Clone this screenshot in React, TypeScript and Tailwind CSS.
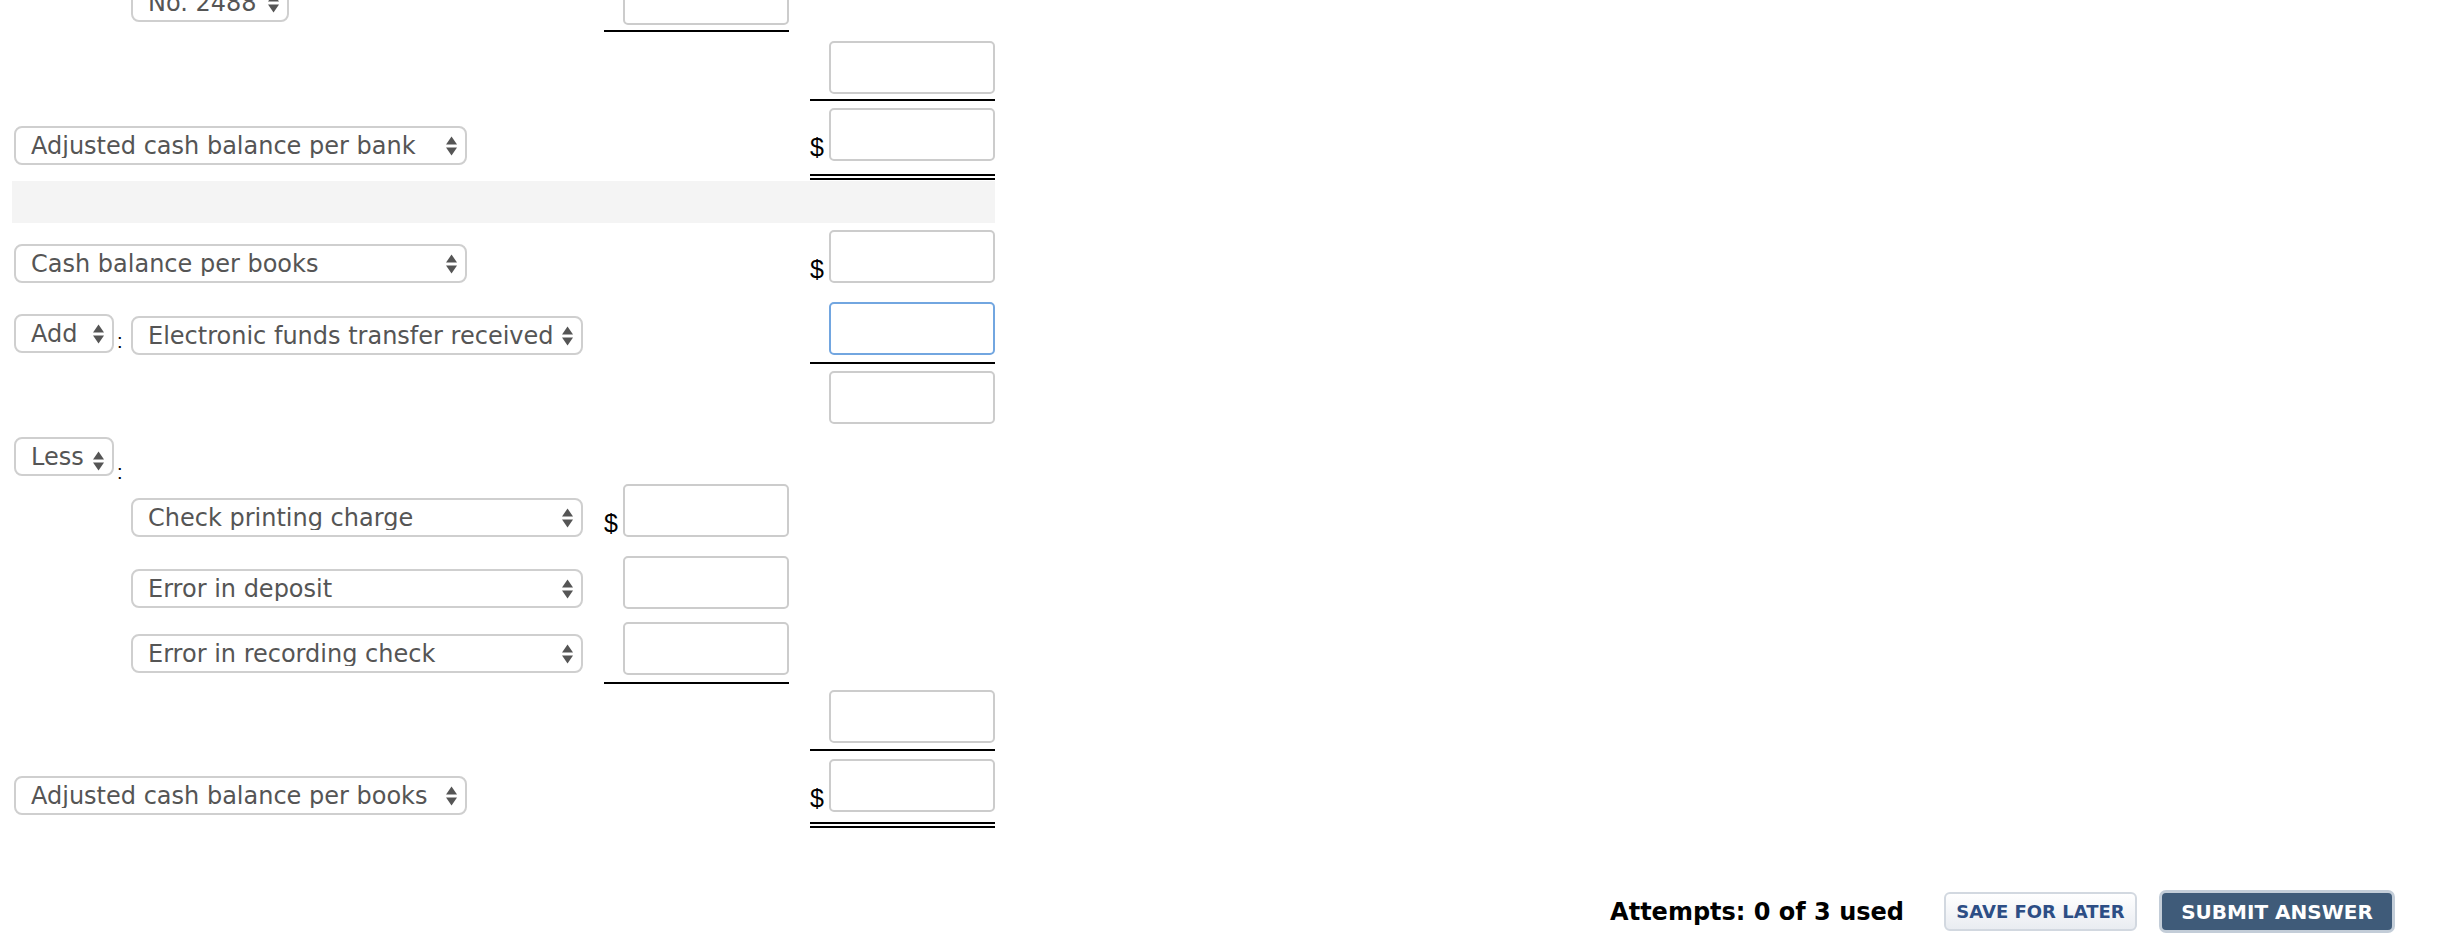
import React from 'react';

function Arrows() {
  return (
    <svg
      className="pointer-events-none absolute right-[9px] top-1/2 -translate-y-1/2"
      width="13"
      height="21"
      viewBox="0 0 13 21"
      aria-hidden="true"
    >
      <path d="M6.5 1 L12 9 H1 Z" fill="#555" />
      <path d="M6.5 20 L12 12 H1 Z" fill="#555" />
    </svg>
  );
}

function Select({ label, className }: { label: string; className: string }) {
  return (
    <div className={`relative shrink-0 ${className}`}>
      <select className="h-[39px] w-full appearance-none rounded-[8px] border-2 border-[#cfcfcf] bg-white pl-[15px] pr-0 text-[24px] leading-none text-[#555] outline-none">
        <option>{label}</option>
      </select>
      <Arrows />
    </div>
  );
}

type Rule = 'none' | 'single' | 'double';

function Amount({
  dollar = false,
  rule = 'none',
  focused = false,
  ruleGap = 'mt-[5px]',
}: {
  dollar?: boolean;
  rule?: Rule;
  focused?: boolean;
  ruleGap?: string;
}) {
  return (
    <div className="flex w-[185px] flex-col">
      <div className="flex items-end">
        <span className="w-[19px] pb-[1px] font-['Liberation_Sans',sans-serif] text-[25px] leading-none text-black">
          {dollar ? '$' : ''}
        </span>
        <input
          type="text"
          className={`h-[53px] w-[166px] rounded-[5px] border-2 bg-white outline-none ${
            focused ? 'border-[#72a6e0]' : 'border-[#cccccc]'
          }`}
        />
      </div>
      {rule === 'single' && <div className={`h-[2px] w-full bg-black ${ruleGap}`} />}
      {rule === 'double' && <div className={`h-[6px] w-full border-y-2 border-black ${ruleGap}`} />}
    </div>
  );
}

function Colon() {
  return (
    <span className="w-[17px] self-end pb-[2px] pl-[3px] font-['Liberation_Sans',sans-serif] text-[20px] leading-none text-black">
      :
    </span>
  );
}

const Empty = () => <div className="w-[185px] shrink-0" />;

export default function App() {
  return (
    <div className="h-[944px] w-[2448px] overflow-hidden bg-white font-['DejaVu_Sans','Verdana',sans-serif]">
      <div className="-mt-[28px] w-[995px] pl-[14px]">
        {/* No. 2488 row (scrolled off the top) */}
        <div className="flex h-[69px]">
          <div className="w-[590px] shrink-0 pl-[117px] pt-[11px]">
            <Select label="No. 2488" className="w-[158px]" />
          </div>
          <Amount rule="single" />
        </div>

        <div className="flex h-[67px]">
          <div className="w-[590px] shrink-0" />
          <Empty />
          <div className="w-[21px]" />
          <Amount rule="single" />
        </div>

        <div className="flex h-[73px]">
          <div className="w-[590px] shrink-0 pt-[18px]">
            <Select label="Adjusted cash balance per bank" className="w-[453px]" />
          </div>
          <Empty />
          <div className="w-[21px]" />
          <Amount dollar rule="double" ruleGap="mt-[13px]" />
        </div>

        <div className="-ml-[2px] mb-[7px] h-[42px] w-[983px] bg-[#f4f4f4]" />

        <div className="flex h-[72px]">
          <div className="w-[590px] shrink-0 pt-[14px]">
            <Select label="Cash balance per books" className="w-[453px]" />
          </div>
          <Empty />
          <div className="w-[21px]" />
          <Amount dollar />
        </div>

        <div className="flex h-[69px]">
          <div className="flex w-[590px] shrink-0 items-start">
            <div className="flex pt-[12px]">
              <Select label="Add" className="w-[100px]" />
              <Colon />
            </div>
            <div className="pt-[14px]">
              <Select label="Electronic funds transfer received" className="w-[452px]" />
            </div>
          </div>
          <Empty />
          <div className="w-[21px]" />
          <Amount focused rule="single" ruleGap="mt-[7px]" />
        </div>

        <div className="flex h-[66px]">
          <div className="w-[590px] shrink-0" />
          <Empty />
          <div className="w-[21px]" />
          <Amount />
        </div>

        <div className="flex h-[47px]">
          <div className="flex w-[590px] shrink-0">
            <Select label="Less" className="w-[100px]" />
            <Colon />
          </div>
        </div>

        <div className="flex h-[72px]">
          <div className="w-[590px] shrink-0 pl-[117px] pt-[14px]">
            <Select label="Check printing charge" className="w-[452px]" />
          </div>
          <Amount dollar />
        </div>

        <div className="flex h-[66px]">
          <div className="w-[590px] shrink-0 pl-[117px] pt-[13px]">
            <Select label="Error in deposit" className="w-[452px]" />
          </div>
          <Amount />
        </div>

        <div className="flex h-[68px]">
          <div className="w-[590px] shrink-0 pl-[117px] pt-[12px]">
            <Select label="Error in recording check" className="w-[452px]" />
          </div>
          <Amount rule="single" ruleGap="mt-[7px]" />
        </div>

        <div className="flex h-[69px]">
          <div className="w-[590px] shrink-0" />
          <Empty />
          <div className="w-[21px]" />
          <Amount rule="single" ruleGap="mt-[6px]" />
        </div>

        <div className="flex h-[131px]">
          <div className="w-[590px] shrink-0 pt-[17px]">
            <Select label="Adjusted cash balance per books" className="w-[453px]" />
          </div>
          <Empty />
          <div className="w-[21px]" />
          <Amount dollar rule="double" ruleGap="mt-[10px]" />
        </div>
      </div>

      <div className="flex h-[43px] items-center justify-end pr-[53px]">
        <span className="mr-[40px] text-[24px] font-bold text-black">Attempts: 0 of 3 used</span>
        <button
          type="button"
          className="mr-[22px] h-[39px] w-[193px] rounded-[6px] border-2 border-[#d2d8e0] bg-gradient-to-b from-white to-[#e9ecf1] text-[18px] font-bold text-[#2d4e85]"
        >
          SAVE FOR LATER
        </button>
        <button
          type="button"
          className="h-[43px] w-[236px] rounded-[7px] border-[3px] border-[#c3cdd8] bg-[#3f5b79] text-[20px] font-bold text-white"
        >
          SUBMIT ANSWER
        </button>
      </div>
    </div>
  );
}
